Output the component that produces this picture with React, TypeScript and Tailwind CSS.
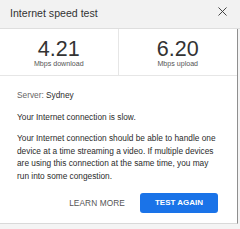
import { X } from 'lucide-react';

export default function App() {
  return (
    <div className="w-[240px] h-[229px] bg-[#f4f4f4] font-['Liberation_Sans',Arial,sans-serif] overflow-hidden">
      {/* Header */}
      <div className="h-[29px] flex items-center justify-between pl-[10px] pr-[10px] bg-[#f2f2f2] border-b border-[#dedede]">
        <h1 className="text-[10.6px] text-[#333]">Internet speed test</h1>
        <X className="w-[15px] h-[15px] text-[#3a3a3a] -mt-[5px]" strokeWidth={1.5} />
      </div>

      <div className="w-[238px] h-[195px] bg-white border-r border-[#8f8f8f] border-b border-b-[#d9d9d9]">
        {/* Speeds */}
        <div className="grid grid-cols-2 h-[47px] border-b border-[#e6e6e6]">
          <div className="flex flex-col items-center pt-[9px] border-r border-[#e6e6e6]">
            <span className="text-[21.5px] leading-[22px] text-[#333]">4.21</span>
            <span className="text-[7.1px] leading-[9px] text-[#555]">Mbps download</span>
          </div>
          <div className="flex flex-col items-center pt-[9px]">
            <span className="text-[21.5px] leading-[22px] text-[#333]">6.20</span>
            <span className="text-[7.1px] leading-[9px] text-[#555]">Mbps upload</span>
          </div>
        </div>

        {/* Details */}
        <div className="pl-[17px] pr-[19px] pt-[13px] text-[8.3px] leading-[12px] text-[#2b2b2b]">
          <p>
            <span className="text-[#666]">Server:</span> Sydney
          </p>
          <p className="mt-[10px]">Your Internet connection is slow.</p>
          <p className="mt-[9px] leading-[12.5px]">
            Your Internet connection should be able to handle one device at a time streaming a video.
            If multiple devices are using this connection at the same time, you may run into some
            congestion.
          </p>
          <div className="flex items-center justify-end gap-[15px] mt-[11px]">
            <button className="text-[8.3px] text-[#555] tracking-[0.1px]">LEARN MORE</button>
            <button className="w-[78px] h-[20px] rounded-[3px] bg-[#1a73e8] text-white text-[8px] font-bold">
              TEST AGAIN
            </button>
          </div>
        </div>
      </div>
    </div>
  );
}
